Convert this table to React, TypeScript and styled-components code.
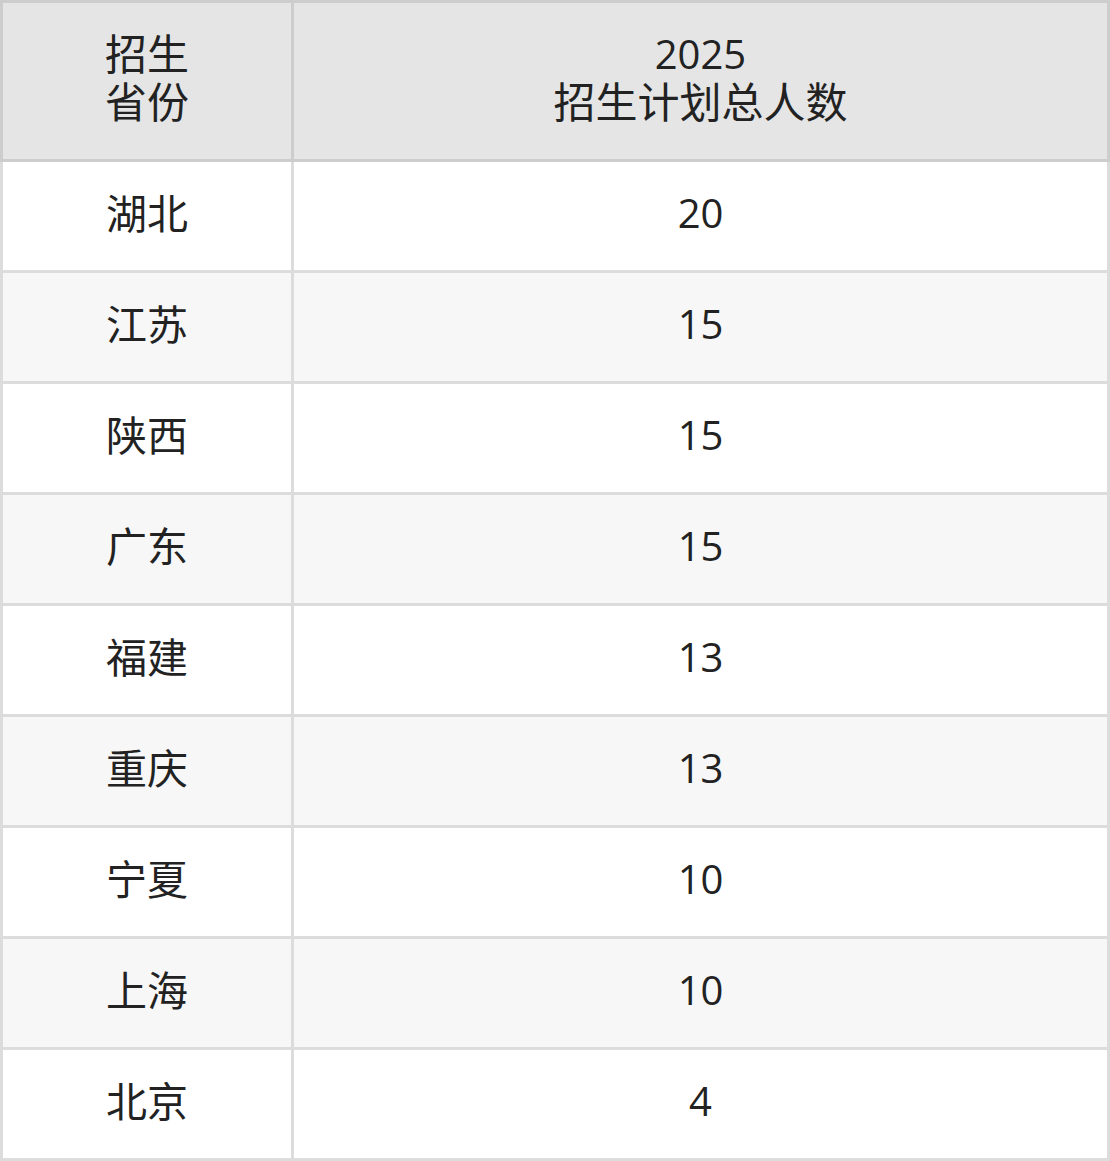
import styled, { createGlobalStyle } from 'styled-components'

const GlobalStyle = createGlobalStyle`
    html, body {
        margin: 0;
        padding: 0;
        background: #ffffff;
    }
    body {
        font-family: "Open Sans", "Noto Sans CJK SC", sans-serif;
    }
`

const PlanTable = styled.table`
    width: 1110px;
    border-collapse: collapse;
    table-layout: fixed;
    font-family: "Open Sans", "Noto Sans CJK SC", sans-serif;
    font-size: 40px;
    line-height: 48px;
    color: #222222;
`

const HeadCell = styled.th`
    background: #e5e5e5;
    border: 3px solid #cdcdcd;
    padding: 27px 0 33px;
    font-weight: normal;
    text-align: center;
    vertical-align: top;
`

// the Chinese glyphs sit a touch larger than the digits in the original
const HeadLine = styled.div<{ $han?: boolean }>`
    height: 48px;
    line-height: 48px;
    font-size: ${p => (p.$han ? '42px' : '40px')};
`

const Row = styled.tr<{ $striped: boolean }>`
    background: ${p => (p.$striped ? '#f7f7f7' : '#ffffff')};
`

const Cell = styled.td<{ $han?: boolean }>`
    border: 3px solid #dcdcdc;
    padding: 27px 0 33px;
    height: 48px;
    font-size: ${p => (p.$han ? '41px' : '40px')};
    text-align: center;
    vertical-align: top;
`

interface Plan {
    province: string
    total: number
}

const plans: Plan[] = [
    { province: '湖北', total: 20 },
    { province: '江苏', total: 15 },
    { province: '陕西', total: 15 },
    { province: '广东', total: 15 },
    { province: '福建', total: 13 },
    { province: '重庆', total: 13 },
    { province: '宁夏', total: 10 },
    { province: '上海', total: 10 },
    { province: '北京', total: 4 },
]

const App = () => {
    return (
        <>
            <GlobalStyle />
            <PlanTable>
                <colgroup>
                    <col style={{ width: 291 }} />
                    <col />
                </colgroup>
                <thead>
                    <tr>
                        <HeadCell>
                            <HeadLine $han>招生</HeadLine>
                            <HeadLine $han>省份</HeadLine>
                        </HeadCell>
                        <HeadCell>
                            <HeadLine>2025</HeadLine>
                            <HeadLine $han>招生计划总人数</HeadLine>
                        </HeadCell>
                    </tr>
                </thead>
                <tbody>
                    {plans.map((plan, i) => (
                        <Row key={plan.province} $striped={i % 2 === 1}>
                            <Cell $han>{plan.province}</Cell>
                            <Cell>{plan.total}</Cell>
                        </Row>
                    ))}
                </tbody>
            </PlanTable>
        </>
    )
}

export default App
